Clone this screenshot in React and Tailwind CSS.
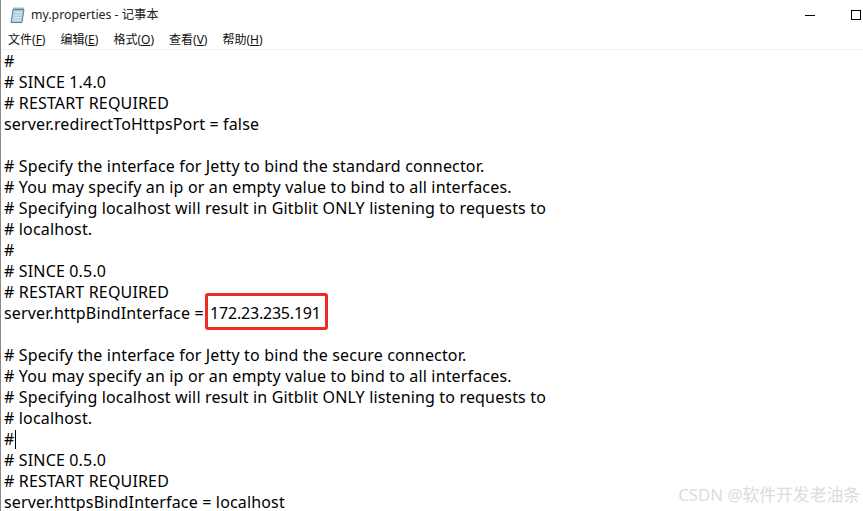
const lines = [
  '#',
  '# SINCE 1.4.0',
  '# RESTART REQUIRED',
  'server.redirectToHttpsPort = false',
  '',
  '# Specify the interface for Jetty to bind the standard connector.',
  '# You may specify an ip or an empty value to bind to all interfaces.',
  '# Specifying localhost will result in Gitblit ONLY listening to requests to',
  '# localhost.',
  '#',
  '# SINCE 0.5.0',
  '# RESTART REQUIRED',
  'BIND',
  '',
  '# Specify the interface for Jetty to bind the secure connector.',
  '# You may specify an ip or an empty value to bind to all interfaces.',
  '# Specifying localhost will result in Gitblit ONLY listening to requests to',
  '# localhost.',
  'CARET',
  '# SINCE 0.5.0',
  '# RESTART REQUIRED',
  'server.httpsBindInterface = localhost',
];

const menus = [
  ['文件', 'F'],
  ['编辑', 'E'],
  ['格式', 'O'],
  ['查看', 'V'],
  ['帮助', 'H'],
];

function NotepadIcon() {
  return (
    <svg width="16" height="17" viewBox="0 0 16 17" className="shrink-0">
      <path d="M3 2.5h11l-2 13H1z" fill="#a9cfe6" stroke="#5f7f95" strokeWidth="1" />
      <path d="M4.5 5.5h7M4 8h7M3.7 10.5h7M3.4 13h7" stroke="#dcebf4" strokeWidth="1" />
      <path d="M3.5 1.5h10.5" stroke="#6d6d6d" strokeWidth="2" strokeDasharray="1 1" />
    </svg>
  );
}

function Line({ text }) {
  if (text === 'BIND') {
    return (
      <div className="h-[21px] whitespace-pre">
        server.httpBindInterface ={' '}
        <span className="relative ml-[2px] tracking-[-0.2px]">
          172.23.235.191
          <span className="absolute left-[-5px] right-[-7px] top-[-9px] bottom-[-6px] border-[3px] border-[#ee2a22] rounded-[3px]" />
        </span>
      </div>
    );
  }
  if (text === 'CARET') {
    return (
      <div className="h-[21px] whitespace-pre flex items-start">
        #<span className="w-px h-[19px] mt-[1px] bg-black" />
      </div>
    );
  }
  return <div className="h-[21px] whitespace-pre">{text}</div>;
}

export default function App() {
  return (
    <div className="relative w-[863px] h-[511px] overflow-hidden bg-white border-l border-[#8a8a8a] font-['Noto_Sans','Noto_Sans_CJK_SC',sans-serif] text-black">
      <div className="h-[30px] flex items-center pl-[9px] pr-[2px]">
        <NotepadIcon />
        <span className="ml-[5px] text-[12.3px] text-[#222]">my.properties - 记事本</span>
        <div className="ml-auto flex items-center gap-[36px]">
          <span className="w-[10px] h-px bg-black" />
          <span className="w-[10px] h-[10px] border border-black" />
        </div>
      </div>
      <div className="h-[19px] flex items-center gap-[15px] pl-[7px] text-[12px] text-[#111]">
        {menus.map(([name, key]) => (
          <span key={key}>
            {name}(<span className="underline">{key}</span>)
          </span>
        ))}
      </div>
      <div className="border-t border-[#f0f0f0] pt-[1px] pl-[3px] text-[16px] leading-[21px] tracking-[0.16px]">
        {lines.map((text, i) => (
          <Line key={i} text={text} />
        ))}
      </div>
      <div className="absolute right-[3px] bottom-[4px] text-[16.8px] text-[#dcdcdc]">CSDN @软件开发老油条</div>
    </div>
  );
}
